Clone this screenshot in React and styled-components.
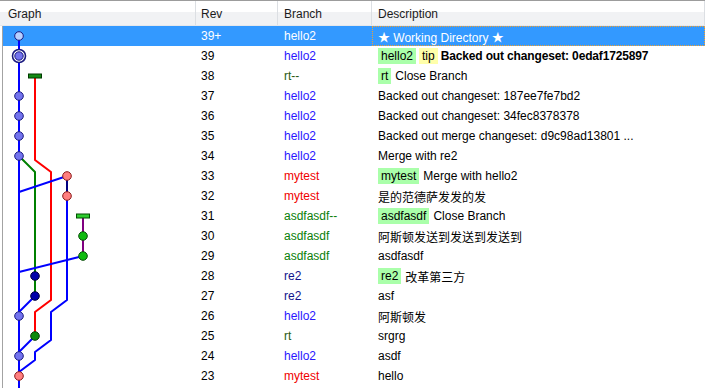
import React from "react";
import styled, { createGlobalStyle } from "styled-components";

const GlobalStyle = createGlobalStyle`
  body {
    margin: 0;
    background: #ffffff;
    font-family: "Liberation Sans", "Noto Sans CJK SC", sans-serif;
  }
`;

const GREEN_TAG = "#aaffaa";
const YELLOW_TAG = "#ffffaa";

const BRANCH_COLORS = {
  hello2: "#2a16ff",
  "rt--": "#2b5a14",
  rt: "#2b5a14",
  mytest: "#f00000",
  asdfasdf: "#0a800a",
  "asdfasdf--": "#0a800a",
  re2: "#12128c",
};

const ROWS = [
  { rev: "39+", branch: "hello2", desc: "★ Working Directory ★", selected: true },
  { rev: "39", branch: "hello2", tags: [["hello2", GREEN_TAG], ["tip", YELLOW_TAG]], desc: "Backed out changeset: 0edaf1725897", bold: true },
  { rev: "38", branch: "rt--", tags: [["rt", GREEN_TAG]], desc: "Close Branch" },
  { rev: "37", branch: "hello2", desc: "Backed out changeset: 187ee7fe7bd2" },
  { rev: "36", branch: "hello2", desc: "Backed out changeset: 34fec8378378" },
  { rev: "35", branch: "hello2", desc: "Backed out merge changeset: d9c98ad13801 ..." },
  { rev: "34", branch: "hello2", desc: "Merge with re2" },
  { rev: "33", branch: "mytest", tags: [["mytest", GREEN_TAG]], desc: "Merge with hello2" },
  { rev: "32", branch: "mytest", desc: "是的范德萨发发的发" },
  { rev: "31", branch: "asdfasdf--", tags: [["asdfasdf", GREEN_TAG]], desc: "Close Branch" },
  { rev: "30", branch: "asdfasdf", desc: "阿斯顿发送到发送到发送到" },
  { rev: "29", branch: "asdfasdf", desc: "asdfasdf" },
  { rev: "28", branch: "re2", tags: [["re2", GREEN_TAG]], desc: "改革第三方" },
  { rev: "27", branch: "re2", desc: "asf" },
  { rev: "26", branch: "hello2", desc: "阿斯顿发" },
  { rev: "25", branch: "rt", desc: "srgrg" },
  { rev: "24", branch: "hello2", desc: "asdf" },
  { rev: "23", branch: "mytest", desc: "hello" },
  { rev: "", branch: "", desc: "" },
];

// graph drawing, in body coordinates: lane k at x = 16 + 16k, row i centred at y = 10 + 20i
const EDGES = [
  { color: "#0000ff", d: "M16 10 V400" },
  { color: "#ff0000", d: "M32 50 V134 L48 146 V274 L32 286 V310" },
  { color: "#008000", d: "M16 130 L32 146 V270" },
  { color: "#000080", d: "M64 150 V170" },
  { color: "#0000ff", d: "M64 150 L16 166" },
  { color: "#0000ff", d: "M64 170 V274 L48 286 V314 L32 326 V334 L16 346 V350" },
  { color: "#800080", d: "M80 190 V230" },
  { color: "#0000ff", d: "M80 230 L16 246" },
  { color: "#0000ff", d: "M32 270 L16 286" },
  { color: "#0000ff", d: "M32 310 L16 326" },
];

const NODE_STYLES = {
  wd: { fill: "#b8d0ff", stroke: "#1a1a80" },
  hello2: { fill: "#7373ee", stroke: "#1a1a80" },
  mytest: { fill: "#ff7f7f", stroke: "#8b1a1a" },
  asd: { fill: "#11bb11", stroke: "#0a4d0a" },
  re2: { fill: "#0000aa", stroke: "#00003a" },
  rt: { fill: "#0b8a0b", stroke: "#0a3a0a" },
};

const NODES = [
  { row: 0, lane: 0, kind: "wd" },
  { row: 1, lane: 0, kind: "hello2", double: true },
  { row: 2, lane: 1, closed: "#148a14", edge: "#003800" },
  { row: 3, lane: 0, kind: "hello2" },
  { row: 4, lane: 0, kind: "hello2" },
  { row: 5, lane: 0, kind: "hello2" },
  { row: 6, lane: 0, kind: "hello2" },
  { row: 7, lane: 3, kind: "mytest" },
  { row: 8, lane: 3, kind: "mytest" },
  { row: 9, lane: 4, closed: "#2ecc2e", edge: "#005000" },
  { row: 10, lane: 4, kind: "asd" },
  { row: 11, lane: 4, kind: "asd" },
  { row: 12, lane: 1, kind: "re2" },
  { row: 13, lane: 1, kind: "re2" },
  { row: 14, lane: 0, kind: "hello2" },
  { row: 15, lane: 1, kind: "rt" },
  { row: 16, lane: 0, kind: "hello2" },
  { row: 17, lane: 0, kind: "mytest" },
];

const GRAPH_WIDTH = 193;
const ROW_HEIGHT = 20;

const Frame = styled.div`
  width: 705px;
  height: 388px;
  overflow: hidden;
  box-sizing: border-box;
  border-top: 1px solid #9c9c9c;
  background: #ffffff;
  font-size: 12px;
  color: #000000;
`;

const HeaderBar = styled.div`
  display: grid;
  grid-template-columns: 196px 82px 94px 1fr;
  height: 24px;
  background: linear-gradient(#ffffff 0, #ffffff 45%, #f1f2f4 45%, #f1f2f4 100%);
  border-bottom: 1px solid #e6e8eb;
`;

const HeaderCell = styled.div`
  display: flex;
  align-items: center;
  padding-left: ${(props) => props.$pad}px;
  padding-top: 2px;
  border-right: 1px solid #dcdfe3;
  color: #1b1b1b;
`;

const Body = styled.div`
  margin-left: 2px;
  border-left: 1px solid #a3a3a3;
`;

const Row = styled.div`
  display: grid;
  grid-template-columns: ${GRAPH_WIDTH}px 82px 94px 1fr;
  height: ${ROW_HEIGHT}px;
  background: ${(props) => (props.$selected ? "#3399ff" : "transparent")};
  color: ${(props) => (props.$selected ? "#ffffff" : "#000000")};
`;

const GraphSvg = styled.svg`
  display: block;
`;

const Cell = styled.div`
  display: flex;
  align-items: center;
  padding-left: ${(props) => props.$pad}px;
  white-space: nowrap;
  overflow: hidden;
`;

const BranchCell = styled(Cell)`
  color: ${(props) => props.$color};
`;

const DescCell = styled(Cell)`
  gap: 3px;
  box-sizing: border-box;
  border: 1px dotted ${(props) => (props.$focus ? "#f0a030" : "transparent")};
  padding-left: 5px;
`;

const Tag = styled.span`
  display: inline-block;
  height: 16px;
  line-height: 16px;
  padding: 0 3px;
  background: ${(props) => props.$bg};
  color: #000000;
`;

const Bold = styled.span`
  font-weight: bold;
  letter-spacing: -0.15px;
`;

const Plain = styled.span`
  margin-left: 1px;
`;

function GraphSlice({ row }) {
  return (
    <GraphSvg
      width={GRAPH_WIDTH}
      height={ROW_HEIGHT}
      viewBox={`0 ${row * ROW_HEIGHT} ${GRAPH_WIDTH} ${ROW_HEIGHT}`}
    >
      {EDGES.map((e, i) => (
        <path
          key={i}
          d={e.d}
          fill="none"
          stroke={e.color}
          strokeWidth="2"
          strokeLinejoin="round"
        />
      ))}
      {NODES.map((n) => {
        const x = 16 + 16 * n.lane;
        const y = 10 + 20 * n.row;
        if (n.closed) {
          return (
            <rect
              key={n.row}
              x={x - 6.5}
              y={y - 2}
              width="13"
              height="4"
              fill={n.closed}
              stroke={n.edge}
              strokeWidth="1"
            />
          );
        }
        const s = NODE_STYLES[n.kind];
        if (n.double) {
          return (
            <g key={n.row}>
              <circle cx={x} cy={y} r="6.5" fill="#ffffff" stroke={s.stroke} strokeWidth="1.6" />
              <circle cx={x} cy={y} r="4.2" fill={s.fill} stroke={s.stroke} strokeWidth="1" />
            </g>
          );
        }
        return (
          <circle key={n.row} cx={x} cy={y} r="4.3" fill={s.fill} stroke={s.stroke} strokeWidth="1" />
        );
      })}
    </GraphSvg>
  );
}

export default function App() {
  return (
    <>
      <GlobalStyle />
      <Frame>
        <HeaderBar>
          <HeaderCell $pad={8}>Graph</HeaderCell>
          <HeaderCell $pad={5}>Rev</HeaderCell>
          <HeaderCell $pad={6}>Branch</HeaderCell>
          <HeaderCell $pad={6}>Description</HeaderCell>
        </HeaderBar>
        <Body>
          {ROWS.map((r, i) => (
            <Row key={i} $selected={r.selected}>
              <GraphSlice row={i} />
              <Cell $pad={5}>{r.rev}</Cell>
              <BranchCell
                $pad={6}
                $color={r.selected ? "#ffffff" : BRANCH_COLORS[r.branch]}
              >
                {r.branch}
              </BranchCell>
              <DescCell $focus={r.selected}>
                {(r.tags || []).map(([t, bg]) => (
                  <Tag key={t} $bg={bg}>
                    {t}
                  </Tag>
                ))}
                {r.bold ? <Bold>{r.desc}</Bold> : r.tags ? <Plain>{r.desc}</Plain> : r.desc}
              </DescCell>
            </Row>
          ))}
        </Body>
      </Frame>
    </>
  );
}
